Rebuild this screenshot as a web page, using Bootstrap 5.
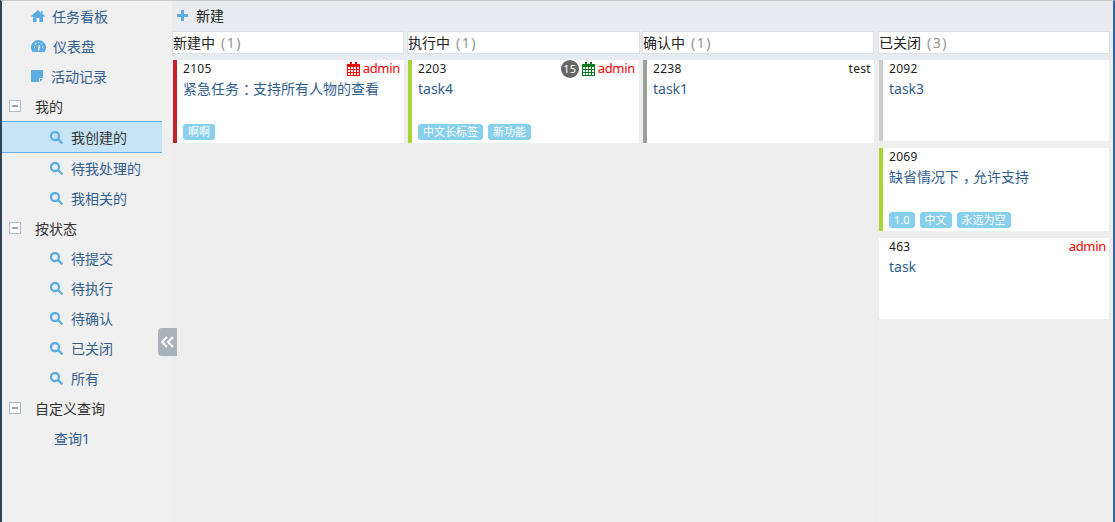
<!DOCTYPE html>
<html lang="zh">
<head>
<meta charset="utf-8">
<title>任务看板</title>
<link href="https://cdn.jsdelivr.net/npm/bootstrap@5.3.0/dist/css/bootstrap.min.css" rel="stylesheet">
<style>
html,body{height:522px;overflow:hidden;margin:0}
body{font-family:"Noto Sans","Noto Sans CJK SC",sans-serif;font-size:14px;color:#222;background:#eee}
.shell{height:522px;border-top:1px solid #c8c8c8;border-left:2px solid #2f4558;border-right:2px solid #34659c}
.side{width:170px;flex:none;background:#f0f0f0;position:relative}
.side-row{height:30px;display:flex;align-items:center;color:#333;font-size:14px;white-space:nowrap}
.side-link{color:#31608f}
.side-top svg{margin-left:29px;margin-right:7px;flex:none}
.side-group svg{margin-left:7px;margin-right:14px;flex:none}
.side-sub svg{margin-left:48px;margin-right:8px;flex:none}
.side-plain{padding-left:52px}
.side-on{background:#c7e4f6;border-top:1px solid #62aee4;border-bottom:1px solid #62aee4;color:#333;width:160px;height:32px}
.collapse-tab{position:absolute;left:156px;top:327px;width:19px;height:28px;background:#a8b2bb;border-radius:4px 0 0 4px;display:flex;align-items:center;justify-content:center}
.board{min-width:0;background:#eee}
.tool{height:30px;background:#e8ebf0;display:flex;align-items:center;padding-left:5px;padding-bottom:1px;gap:8px;color:#222}
.heads{background:#e8ebf0;height:29px;display:grid;grid-template-columns:235px 235px 236px 235px}
.head-cell{height:23px;background:#fff;border:1px solid #dde0e5;display:flex;align-items:center;white-space:nowrap;font-size:14px;margin-right:3px}
.head-cell:nth-child(2){margin-right:2px}
.head-cell:nth-child(3){margin-right:4px}
.head-cell span{color:#949494;margin-left:6px;letter-spacing:1.500px}
.lanes{display:grid;grid-template-columns:235px 235px 236px 235px}
.lane{padding-left:1px;border-right:3px solid #ebedf1}
.lane:nth-child(n+3){border-right-width:4px}
.lane:last-child{border-right-color:#eee}
.tile{background:#fff;height:81px;margin-bottom:7px;padding:1px 4px 0 6px;border-left:4px solid transparent;display:flex;flex-direction:column}
.lane:nth-child(n+3) .tile{padding-right:3px}
.tile-tall{height:83px}
.tile-top{display:flex;align-items:center;justify-content:space-between;height:16px;font-size:12px;color:#222;letter-spacing:.3px}
.tile-who{display:flex;align-items:center;gap:3px;color:#f00;font-size:13px;letter-spacing:-.3px}
.tile-title{color:#31608f;font-size:14px;margin-top:2px;line-height:20px;white-space:nowrap}
.punct-mid{padding-left:4px;letter-spacing:-4px}
.tag-row{margin-top:auto;display:flex;gap:5px;padding-bottom:3px}
.tag-pill{background:#87cfeb;color:#fff;font-size:11px;height:16px;line-height:16px;padding:0 5px;border-radius:3px}
.count-dot{width:18px;height:18px;border-radius:50%;background:#666;color:#fff;font-size:11px;letter-spacing:0;display:flex;align-items:center;justify-content:center}
</style>
</head>
<body>
<div class="shell d-flex">
  <nav class="side">
    <div class="side-row side-top side-link"><svg width="14" height="12" viewBox="0 0 14 12"><path fill="#5dade2" d="M7 0 0 6l1 1 1-.8V12h3.600V8h2.800v4H12V6.200l1 .8 1-1-2.500-2.100V1H10v2.100z"/></svg>任务看板</div>
    <div class="side-row side-top side-link"><svg width="15" height="12" viewBox="0 0 15 12" style="margin-right:7px"><path fill="#5dade2" d="M7.500 0A7.500 7.500 0 0 0 0 7.500C0 9.200.5 10.800 1.500 12h12c1-1.200 1.500-2.800 1.500-4.500A7.500 7.500 0 0 0 7.500 0z"/><path stroke="#f0f0f0" stroke-width="1.500" d="M7.500 10.500 8.500 5M3 7h1M11 7h1M4.500 3.500l.6.6M7.500 2v1M10.500 3.500l-.6.6"/></svg>仪表盘</div>
    <div class="side-row side-top side-link"><svg width="12" height="12" viewBox="0 0 12 12" style="margin-left:29px;margin-right:8px"><path fill="#5dade2" d="M0 0h12v8H9a1 1 0 0 0-1 1v3H0z"/><path fill="#5dade2" d="M9 9h3l-3 3z"/></svg>活动记录</div>
    <div class="side-row side-group"><svg width="12" height="12" viewBox="0 0 12 12"><rect x=".5" y=".5" width="11" height="11" fill="#fff" stroke="#a9bdd4"/><path stroke="#445" d="M3 6h6"/></svg>我的</div>
    <div class="side-row side-sub side-on"><svg width="13" height="13" viewBox="0 0 13 13"><circle cx="5" cy="5" r="4" fill="none" stroke="#5dade2" stroke-width="2.300"/><path stroke="#5dade2" stroke-width="2.400" d="m8 8 4.300 4.300"/></svg>我创建的</div>
    <div class="side-row side-sub side-link"><svg width="13" height="13" viewBox="0 0 13 13"><circle cx="5" cy="5" r="4" fill="none" stroke="#5dade2" stroke-width="2.300"/><path stroke="#5dade2" stroke-width="2.400" d="m8 8 4.300 4.300"/></svg>待我处理的</div>
    <div class="side-row side-sub side-link"><svg width="13" height="13" viewBox="0 0 13 13"><circle cx="5" cy="5" r="4" fill="none" stroke="#5dade2" stroke-width="2.300"/><path stroke="#5dade2" stroke-width="2.400" d="m8 8 4.300 4.300"/></svg>我相关的</div>
    <div class="side-row side-group"><svg width="12" height="12" viewBox="0 0 12 12"><rect x=".5" y=".5" width="11" height="11" fill="#fff" stroke="#a9bdd4"/><path stroke="#445" d="M3 6h6"/></svg>按状态</div>
    <div class="side-row side-sub side-link"><svg width="13" height="13" viewBox="0 0 13 13"><circle cx="5" cy="5" r="4" fill="none" stroke="#5dade2" stroke-width="2.300"/><path stroke="#5dade2" stroke-width="2.400" d="m8 8 4.300 4.300"/></svg>待提交</div>
    <div class="side-row side-sub side-link"><svg width="13" height="13" viewBox="0 0 13 13"><circle cx="5" cy="5" r="4" fill="none" stroke="#5dade2" stroke-width="2.300"/><path stroke="#5dade2" stroke-width="2.400" d="m8 8 4.300 4.300"/></svg>待执行</div>
    <div class="side-row side-sub side-link"><svg width="13" height="13" viewBox="0 0 13 13"><circle cx="5" cy="5" r="4" fill="none" stroke="#5dade2" stroke-width="2.300"/><path stroke="#5dade2" stroke-width="2.400" d="m8 8 4.300 4.300"/></svg>待确认</div>
    <div class="side-row side-sub side-link"><svg width="13" height="13" viewBox="0 0 13 13"><circle cx="5" cy="5" r="4" fill="none" stroke="#5dade2" stroke-width="2.300"/><path stroke="#5dade2" stroke-width="2.400" d="m8 8 4.300 4.300"/></svg>已关闭</div>
    <div class="side-row side-sub side-link"><svg width="13" height="13" viewBox="0 0 13 13"><circle cx="5" cy="5" r="4" fill="none" stroke="#5dade2" stroke-width="2.300"/><path stroke="#5dade2" stroke-width="2.400" d="m8 8 4.300 4.300"/></svg>所有</div>
    <div class="side-row side-group"><svg width="12" height="12" viewBox="0 0 12 12"><rect x=".5" y=".5" width="11" height="11" fill="#fff" stroke="#a9bdd4"/><path stroke="#445" d="M3 6h6"/></svg>自定义查询</div>
    <div class="side-row side-link side-plain">查询1</div>
    <div class="collapse-tab"><svg width="13" height="12" viewBox="0 0 13 12"><path fill="none" stroke="#fff" stroke-width="2" d="M6 1 1 6l5 5M12 1 7 6l5 5"/></svg></div>
  </nav>
  <main class="board flex-grow-1 d-flex flex-column">
    <div class="tool"><svg width="11" height="11" viewBox="0 0 11 11"><path fill="#5dade2" d="M4 0h3v4h4v3H7v4H4V7H0V4h4z"/></svg>新建</div>
    <div class="heads">
      <div class="head-cell">新建中<span>(1)</span></div>
      <div class="head-cell">执行中<span>(1)</span></div>
      <div class="head-cell">确认中<span>(1)</span></div>
      <div class="head-cell">已关闭<span>(3)</span></div>
    </div>
    <div class="lanes flex-grow-1">
      <section class="lane">
        <article class="tile tile-tall" style="border-left-color:#c12127">
          <div class="tile-top"><span>2105</span><span class="tile-who"><svg width="13" height="14" viewBox="0 0 13 14"><path fill="#f00" d="M3 0h2v2h3V0h2v2h3v12H0V2h3z"/><path fill="#fff" d="M1 5h2.200v2H1zM4 5h2.200v2H4zM7 5h2v2H7zM10 5h2v2h-2zM1 8h2.200v2H1zM4 8h2.200v2H4zM7 8h2v2H7zM10 8h2v2h-2zM1 11h2.200v2H1zM4 11h2.200v2H4zM7 11h2v2H7zM10 11h2v2h-2z"/></svg>admin</span></div>
          <div class="tile-title">紧急任务<span class="punct-mid">：</span>支持所有人物的查看</div>
          <div class="tag-row"><span class="tag-pill">啊啊</span></div>
        </article>
      </section>
      <section class="lane">
        <article class="tile tile-tall" style="border-left-color:#a8d52f">
          <div class="tile-top"><span>2203</span><span class="tile-who"><span class="count-dot">15</span><svg width="13" height="14" viewBox="0 0 13 14"><path fill="#0a7a1e" d="M3 0h2v2h3V0h2v2h3v12H0V2h3z"/><path fill="#fff" d="M1 5h2.200v2H1zM4 5h2.200v2H4zM7 5h2v2H7zM10 5h2v2h-2zM1 8h2.200v2H1zM4 8h2.200v2H4zM7 8h2v2H7zM10 8h2v2h-2zM1 11h2.200v2H1zM4 11h2.200v2H4zM7 11h2v2H7zM10 11h2v2h-2z"/></svg>admin</span></div>
          <div class="tile-title">task4</div>
          <div class="tag-row"><span class="tag-pill">中文长标签</span><span class="tag-pill">新功能</span></div>
        </article>
      </section>
      <section class="lane">
        <article class="tile tile-tall" style="border-left-color:#9a9f98">
          <div class="tile-top"><span>2238</span><span>test</span></div>
          <div class="tile-title">task1</div>
        </article>
      </section>
      <section class="lane">
        <article class="tile" style="border-left-color:#ccc">
          <div class="tile-top"><span>2092</span></div>
          <div class="tile-title">task3</div>
        </article>
        <article class="tile tile-tall" style="border-left-color:#a8d52f">
          <div class="tile-top"><span>2069</span></div>
          <div class="tile-title">缺省情况下<span class="punct-mid">，</span>允许支持</div>
          <div class="tag-row"><span class="tag-pill">1.0</span><span class="tag-pill">中文</span><span class="tag-pill">永远为空</span></div>
        </article>
        <article class="tile">
          <div class="tile-top"><span>463</span><span class="tile-who">admin</span></div>
          <div class="tile-title">task</div>
        </article>
      </section>
    </div>
  </main>
</div>
<script src="https://cdn.jsdelivr.net/npm/bootstrap@5.3.0/dist/js/bootstrap.bundle.min.js"></script>
</body>
</html>
